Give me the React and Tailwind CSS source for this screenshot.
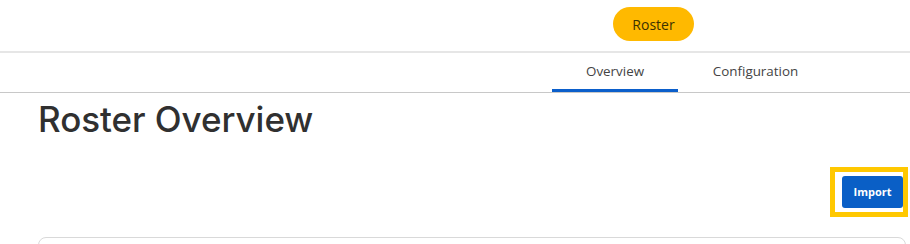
import React from "react";

const tabs = [
  { label: "Overview", active: true, w: "w-[126px]" },
  { label: "Configuration", active: false, w: "w-[155px]" },
];

const App = () => {
  return (
    <div className="w-[910px] h-[244px] overflow-hidden bg-white font-['Open_Sans',sans-serif]">
      <div className="h-[51px] flex justify-end pr-[216px] pt-[7px]">
        <button className="h-[34px] w-[81px] rounded-full bg-[#ffb900] text-[14px] text-[#3b3200]">
          Roster
        </button>
      </div>
      <div className="h-[2px] bg-[#e6e6e6]" />
      <div className="h-[40px] flex justify-end pr-[77px] border-b border-[#c8c8c8]">
        {tabs.map((t) => (
          <div
            key={t.label}
            className={`${t.w} flex items-center justify-center text-[13.4px] text-[#444] pb-[2px] ${
              t.active ? "border-b-[3px] border-[#0b5fcb] pt-[3px]" : ""
            }`}
          >
            {t.label}
          </div>
        ))}
      </div>
      <div className="pl-[38px] pr-[4px]">
        <h1 className="pt-[4px] text-[35px] leading-[44px] font-medium text-[#303030] font-['Inter',sans-serif] tracking-[-0.05px]">
          Roster Overview
        </h1>
        <div className="flex justify-end mt-[26px]">
          <div className="border-[5px] border-[#ffc800] h-[50px] w-[78px] flex items-center pl-[7px] -mr-[2px]">
            <button className="h-[32px] w-[63px] rounded-[3px] bg-[#0a5fc6] text-white text-[11px] font-bold">
              Import
            </button>
          </div>
        </div>
        <div className="mt-[20px] h-[40px] rounded-[8px] border border-[#d9d9d9]" />
      </div>
    </div>
  );
};

export default App;
